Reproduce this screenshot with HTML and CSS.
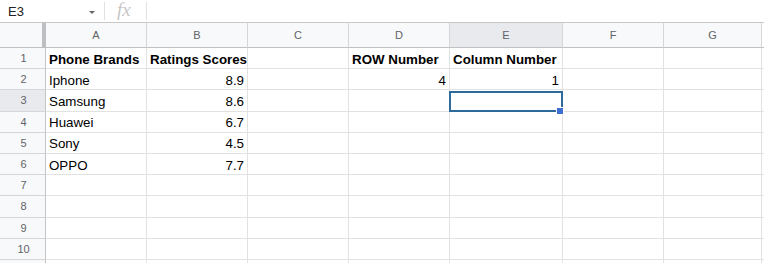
FILE: index.html
```html
<!DOCTYPE html>
<html lang="en">
  <head>
    <meta charset="UTF-8" />
    <meta name="viewport" content="width=device-width, initial-scale=1.0" />
    <title>Planilha</title>
    <link rel="stylesheet" href="styles.css">
  </head>
  <body>
    <!-- Barra da caixa de nome e fórmula -->
    <div class="barra">
      <div class="caixa-nome">
        <span>E3</span>
        <span class="seta"></span>
      </div>
      <div class="fx">fx</div>
      <div class="formula"></div>
    </div>

    <!-- Grade -->
    <div class="grade">
      <div class="canto"></div>
      <div class="hd">A</div>
      <div class="hd">B</div>
      <div class="hd">C</div>
      <div class="hd">D</div>
      <div class="hd ativo">E</div>
      <div class="hd">F</div>
      <div class="hd">G</div>
      <div class="hd vazio"></div>

      <div class="rn">1</div>
      <div class="c b">Phone Brands</div>
      <div class="c b">Ratings Scores</div>
      <div class="c"></div>
      <div class="c b">ROW Number</div>
      <div class="c b">Column Number</div>
      <div class="c"></div>
      <div class="c"></div>
      <div class="c"></div>

      <div class="rn">2</div>
      <div class="c">Iphone</div>
      <div class="c num">8.9</div>
      <div class="c"></div>
      <div class="c num">4</div>
      <div class="c num">1</div>
      <div class="c"></div>
      <div class="c"></div>
      <div class="c"></div>

      <div class="rn ativo">3</div>
      <div class="c">Samsung</div>
      <div class="c num">8.6</div>
      <div class="c"></div>
      <div class="c"></div>
      <div class="c selecionada"></div>
      <div class="c"></div>
      <div class="c"></div>
      <div class="c"></div>

      <div class="rn">4</div>
      <div class="c">Huawei</div>
      <div class="c num">6.7</div>
      <div class="c"></div>
      <div class="c"></div>
      <div class="c"></div>
      <div class="c"></div>
      <div class="c"></div>
      <div class="c"></div>

      <div class="rn">5</div>
      <div class="c">Sony</div>
      <div class="c num">4.5</div>
      <div class="c"></div>
      <div class="c"></div>
      <div class="c"></div>
      <div class="c"></div>
      <div class="c"></div>
      <div class="c"></div>

      <div class="rn">6</div>
      <div class="c">OPPO</div>
      <div class="c num">7.7</div>
      <div class="c"></div>
      <div class="c"></div>
      <div class="c"></div>
      <div class="c"></div>
      <div class="c"></div>
      <div class="c"></div>

      <div class="rn">7</div>
      <div class="c"></div>
      <div class="c"></div>
      <div class="c"></div>
      <div class="c"></div>
      <div class="c"></div>
      <div class="c"></div>
      <div class="c"></div>
      <div class="c"></div>

      <div class="rn">8</div>
      <div class="c"></div>
      <div class="c"></div>
      <div class="c"></div>
      <div class="c"></div>
      <div class="c"></div>
      <div class="c"></div>
      <div class="c"></div>
      <div class="c"></div>

      <div class="rn">9</div>
      <div class="c"></div>
      <div class="c"></div>
      <div class="c"></div>
      <div class="c"></div>
      <div class="c"></div>
      <div class="c"></div>
      <div class="c"></div>
      <div class="c"></div>

      <div class="rn">10</div>
      <div class="c"></div>
      <div class="c"></div>
      <div class="c"></div>
      <div class="c"></div>
      <div class="c"></div>
      <div class="c"></div>
      <div class="c"></div>
      <div class="c"></div>

      <!-- linha 11, só a borda aparece -->
      <div class="rn"></div>
      <div class="c"></div>
      <div class="c"></div>
      <div class="c"></div>
      <div class="c"></div>
      <div class="c"></div>
      <div class="c"></div>
      <div class="c"></div>
      <div class="c"></div>
    </div>
  </body>
</html>
```

FILE: styles.css
```css
/* Corpo */
body {
  margin: 0;
  width: 764px;
  height: 263px;
  overflow: hidden;
  background: #fff;
  font-family: Arial, "Liberation Sans", sans-serif;
  color: #000;
}
/* Barra superior com caixa de nome e fx */
.barra {
  display: flex;
  height: 22px;
  align-items: center;
}
.caixa-nome {
  width: 105px;
  height: 18px;
  display: flex;
  align-items: center;
  justify-content: space-between;
  padding-left: 8px;
  box-sizing: border-box;
  border-right: 1px solid #e1e1e1;
  font-size: 13px;
  color: #222;
}
.seta {
  width: 0;
  height: 0;
  margin-right: 9px;
  margin-top: 3px;
  border-left: 3px solid transparent;
  border-right: 3px solid transparent;
  border-top: 3px solid #666;
}
.fx {
  width: 42px;
  height: 18px;
  box-sizing: border-box;
  border-right: 1px solid #e1e1e1;
  padding-left: 12px;
  font-family: "Liberation Serif", serif;
  font-style: italic;
  font-size: 19px;
  line-height: 16px;
  color: #c6c6c6;
}
.formula {
  flex: 1;
}
/* Grade da planilha */
.grade {
  display: grid;
  grid-template-columns: 46px 101px 101px 101px 101px 113px 101px 98px 1fr;
  grid-template-rows: 26px;
  grid-auto-rows: 21.2px;
}
.grade > div {
  box-sizing: border-box;
  border-right: 1px solid #e2e2e2;
  border-bottom: 1px solid #e2e2e2;
}
.canto {
  background: #f8f9fa;
  border-top: 1px solid #c8c8c8;
  border-right: 4px solid #bdbfc2 !important;
  border-bottom: 1px solid #c0c0c0 !important;
}
.hd {
  background: #f8f9fa;
  border-top: 1px solid #c8c8c8;
  border-right-color: #d6d6d6 !important;
  border-bottom-color: #c0c0c0 !important;
  color: #5f6368;
  font-size: 11px;
  display: flex;
  align-items: center;
  justify-content: center;
}
.hd.ativo,
.rn.ativo {
  background: #e8eaed;
}
.hd.vazio {
  background: #fff;
  border-right: none;
}
.rn {
  background: #f8f9fa;
  border-right-color: #c4c4c4 !important;
  border-bottom-color: #d6d6d6 !important;
  color: #5f6368;
  font-size: 11px;
  display: flex;
  align-items: center;
  justify-content: center;
  padding-left: 2px;
}
.c {
  font-size: 13.33px;
  display: flex;
  align-items: center;
  padding: 2px 3px 0 3px;
  white-space: nowrap;
}
.b {
  font-weight: bold;
}
.num {
  justify-content: flex-end;
}
/* Célula selecionada */
.selecionada {
  position: relative;
}
.selecionada::after {
  content: "";
  position: absolute;
  left: -1px;
  top: 1px;
  right: -1px;
  bottom: -1px;
  border: 2px solid #2f6b9a;
}
.selecionada::before {
  content: "";
  position: absolute;
  right: -2px;
  bottom: -4px;
  width: 6px;
  height: 6px;
  background: #3d6fd0;
  border: 1px solid #fff;
  z-index: 1;
}
```
